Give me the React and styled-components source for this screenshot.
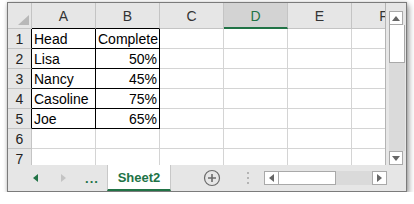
import styled, { createGlobalStyle } from "styled-components";

const GREEN = "#217346";
const GRID = "#d4d4d4";
const HEAD_LINE = "#c4c4c4";

const GlobalStyle = createGlobalStyle`
  body {
    margin: 0;
    background: #ffffff;
    font-family: "Liberation Sans", Arial, sans-serif;
  }
`;

const Window = styled.div`
  margin: 2px 0 0 7px;
  width: 400px;
  height: 190px;
  box-sizing: border-box;
  border: 1px solid #7b7b7b;
  background: #e6e6e6;
  display: flex;
  flex-direction: column;
  box-shadow: 2px 3px 6px rgba(0, 0, 0, 0.38), 0 0 3px rgba(0, 0, 0, 0.15);
`;

const Main = styled.div`
  display: flex;
  height: 162px;
`;

const Grid = styled.div`
  width: 378px;
  overflow: hidden;
  background: #ffffff;
  border-right: 1px solid #b4b4b4;
  box-sizing: border-box;
`;

const Row = styled.div`
  display: flex;
  height: ${(p) => (p.$head ? 26 : 20)}px;
`;

const Corner = styled.div`
  flex: 0 0 24px;
  box-sizing: border-box;
  background: #e6e6e6;
  border-right: 1px solid ${HEAD_LINE};
  border-bottom: 1px solid ${HEAD_LINE};
  position: relative;

  &::after {
    content: "";
    position: absolute;
    right: 2px;
    bottom: 3px;
    border-style: solid;
    border-width: 0 0 10px 11px;
    border-color: transparent transparent #b8b8b8 transparent;
  }
`;

const ColHead = styled.div`
  flex: 0 0 64px;
  box-sizing: border-box;
  display: flex;
  align-items: center;
  justify-content: center;
  background: ${(p) => (p.$active ? "#d3d3d3" : "#e6e6e6")};
  color: ${(p) => (p.$active ? GREEN : "#333")};
  border-right: 1px solid ${HEAD_LINE};
  border-bottom: ${(p) =>
    p.$active ? `2px solid ${GREEN}` : `1px solid ${p.$dark ? "#000" : HEAD_LINE}`};
  font-size: 14px;
  padding-top: 1px;
`;

const RowHead = styled.div`
  flex: 0 0 24px;
  box-sizing: border-box;
  display: flex;
  align-items: center;
  justify-content: center;
  background: #e6e6e6;
  color: #222;
  font-size: 14px;
  border-right: 1px solid ${(p) => (p.$dark ? "#000" : HEAD_LINE)};
  border-bottom: 1px solid ${HEAD_LINE};
`;

const Cell = styled.div`
  flex: 0 0 64px;
  box-sizing: border-box;
  display: flex;
  align-items: center;
  justify-content: ${(p) => (p.$num ? "flex-end" : "flex-start")};
  padding: 1px 2px 0 2px;
  font-size: 14px;
  color: #000;
  white-space: nowrap;
  overflow: hidden;
  border-right: 1px solid ${(p) => (p.$dark ? "#000" : GRID)};
  border-bottom: 1px solid ${(p) => (p.$dark ? "#000" : GRID)};
`;

const VScroll = styled.div`
  width: 20px;
  box-sizing: border-box;
  padding: 8px 1px 0 3px;
  display: flex;
  flex-direction: column;
  background: #e6e6e6;
`;

const ScrollBtn = styled.div`
  flex: 0 0 auto;
  width: ${(p) => (p.$w ? p.$w : "14px")};
  height: ${(p) => (p.$h ? p.$h : "14px")};
  box-sizing: border-box;
  background: #ffffff;
  border: 1px solid #a9a9a9;
  display: flex;
  align-items: center;
  justify-content: center;
`;

const VThumb = styled.div`
  height: 38px;
  box-sizing: border-box;
  background: #ffffff;
  border: 1px solid #a9a9a9;
  border-top: none;
`;

const VTrack = styled.div`
  flex: 1;
  background: #dadada;
`;

const TabBar = styled.div`
  height: 26px;
  display: flex;
  align-items: stretch;
  padding-left: 13px;
`;

const NavSlot = styled.div`
  width: ${(p) => p.$w}px;
  display: flex;
  align-items: center;
  justify-content: center;
  color: ${GREEN};
  font-weight: bold;
  font-size: 13px;
  letter-spacing: 1px;
`;

const Tab = styled.div`
  width: 64px;
  box-sizing: border-box;
  background: #ffffff;
  border-left: 1px solid #c8c8c8;
  border-right: 1px solid #c8c8c8;
  border-bottom: 2px solid ${GREEN};
  color: ${GREEN};
  font-weight: bold;
  font-size: 13px;
  display: flex;
  align-items: center;
  justify-content: center;
  padding-top: 1px;
`;

const IconSlot = styled.div`
  width: ${(p) => p.$w}px;
  margin-left: ${(p) => p.$ml}px;
  display: flex;
  align-items: center;
  justify-content: center;
`;

const HScroll = styled.div`
  margin-left: 9px;
  width: 123px;
  height: 14px;
  align-self: center;
  display: flex;
  background: #dadada;
`;

const HThumb = styled.div`
  width: 57px;
  height: 14px;
  box-sizing: border-box;
  background: #ffffff;
  border: 1px solid #a9a9a9;
  border-left: none;
`;

const HTrack = styled.div`
  flex: 1;
`;

const Tri = ({ dir, color = "#666", size = 7 }) => {
  const pts = {
    up: "0,5 4,0 8,5",
    down: "0,0 8,0 4,5",
    left: "5,0 5,8 0,4",
    right: "0,0 0,8 5,4",
  }[dir];
  const vertical = dir === "up" || dir === "down";
  return (
    <svg
      width={vertical ? size + 1 : 5}
      height={vertical ? 5 : size + 1}
      viewBox={vertical ? "0 0 8 5" : "0 0 5 8"}
    >
      <polygon points={pts} fill={color} />
    </svg>
  );
};

const cols = ["A", "B", "C", "D", "E", "F"];
const rows = [
  ["Head", "Complete"],
  ["Lisa", "50%"],
  ["Nancy", "45%"],
  ["Casoline", "75%"],
  ["Joe", "65%"],
  [],
  [],
];

export default function App() {
  return (
    <>
      <GlobalStyle />
      <Window>
        <Main>
          <Grid>
            <Row $head>
              <Corner />
              {cols.map((c, i) => (
                <ColHead key={c} $active={c === "D"} $dark={i < 2}>
                  {c}
                </ColHead>
              ))}
            </Row>
            {rows.map((r, ri) => {
              const inTable = ri < 5;
              return (
                <Row key={ri}>
                  <RowHead $dark={inTable}>{ri + 1}</RowHead>
                  {cols.map((c, ci) => {
                    const v = r[ci];
                    return (
                      <Cell
                        key={c}
                        $dark={inTable && ci < 2}
                        $num={ci === 1 && ri > 0}
                      >
                        {v}
                      </Cell>
                    );
                  })}
                </Row>
              );
            })}
          </Grid>
          <VScroll>
            <ScrollBtn>
              <Tri dir="up" />
            </ScrollBtn>
            <VThumb />
            <VTrack />
            <ScrollBtn>
              <Tri dir="down" />
            </ScrollBtn>
          </VScroll>
        </Main>
        <TabBar>
          <NavSlot $w={28}>
            <Tri dir="left" color={GREEN} />
          </NavSlot>
          <NavSlot $w={28}>
            <Tri dir="right" color="#c4c4c4" />
          </NavSlot>
          <NavSlot $w={30}>...</NavSlot>
          <Tab>Sheet2</Tab>
          <IconSlot $w={18} $ml={32}>
            <svg width="18" height="18" viewBox="0 0 18 18">
              <circle cx="9" cy="9" r="7.5" fill="none" stroke="#6b6b6b" strokeWidth="1.2" />
              <path d="M9 5v8M5 9h8" stroke="#6b6b6b" strokeWidth="1.6" />
            </svg>
          </IconSlot>
          <IconSlot $w={14} $ml={20}>
            <svg width="4" height="14" viewBox="0 0 4 14">
              <rect x="1" y="1" width="2" height="2" fill="#b4b4b4" />
              <rect x="1" y="6" width="2" height="2" fill="#b4b4b4" />
              <rect x="1" y="11" width="2" height="2" fill="#b4b4b4" />
            </svg>
          </IconSlot>
          <HScroll>
            <ScrollBtn $w="15px">
              <Tri dir="left" />
            </ScrollBtn>
            <HThumb />
            <HTrack />
            <ScrollBtn $w="15px">
              <Tri dir="right" />
            </ScrollBtn>
          </HScroll>
        </TabBar>
      </Window>
    </>
  );
}
